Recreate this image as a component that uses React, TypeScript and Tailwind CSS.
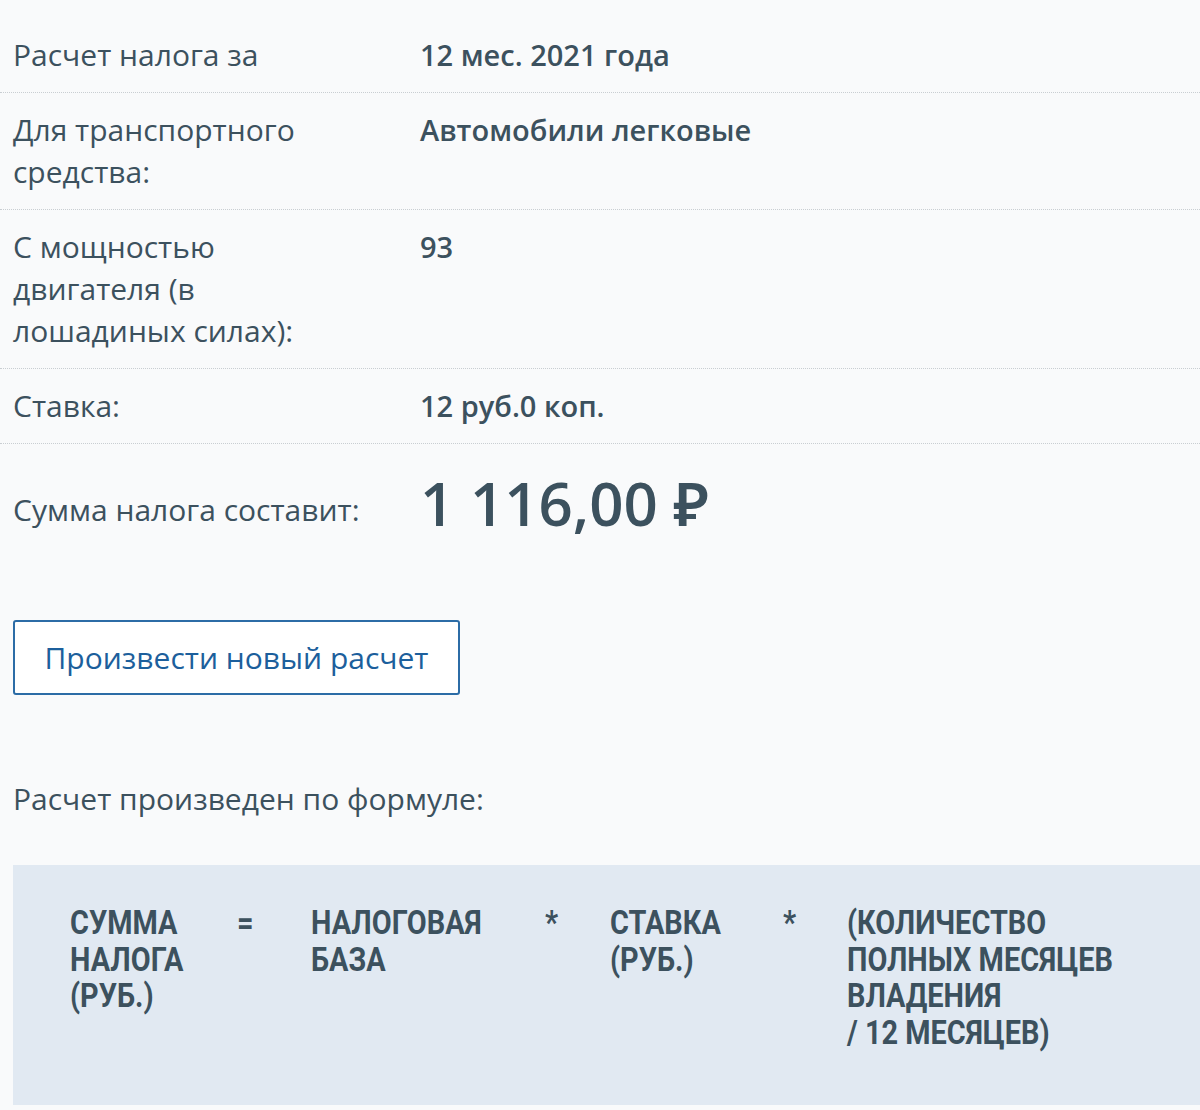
const rows = [
  { label: ['Расчет налога за'], value: '12 мес. 2021 года' },
  { label: ['Для транспортного', 'средства:'], value: 'Автомобили легковые' },
  { label: ['С мощностью', 'двигателя (в', 'лошадиных силах):'], value: '93' },
  { label: ['Ставка:'], value: '12 руб.0 коп.' },
];

const formula = [
  ['СУММА', 'НАЛОГА', '(РУБ.)'],
  ['='],
  ['НАЛОГОВАЯ', 'БАЗА'],
  ['*'],
  ['СТАВКА', '(РУБ.)'],
  ['*'],
  ['(КОЛИЧЕСТВО', 'ПОЛНЫХ МЕСЯЦЕВ', 'ВЛАДЕНИЯ', '/ 12 МЕСЯЦЕВ)'],
];

export default function App() {
  return (
    <div
      className="min-h-[1110px] w-[1200px] overflow-hidden bg-[#f9fafb] pt-[18px] text-[#3c515e]"
      style={{ fontFamily: '"Open Sans", "Noto Sans", sans-serif' }}
    >
      {/* Result rows */}
      {rows.map((row, i) => (
        <div
          key={i}
          className="flex border-b border-dotted border-[#c9ced2] py-4 pl-[13px]"
        >
          <div className="w-[407px] text-[30px] leading-[42px]">
            {row.label.map((l, j) => (
              <div key={j}>{l}</div>
            ))}
          </div>
          <div className="text-[29px] font-semibold leading-[42px]">
            {row.value}
          </div>
        </div>
      ))}

      {/* Total */}
      <div className="flex items-center pl-[13px] pt-[16px]">
        <div className="w-[407px] pt-[14px] text-[30px] leading-[42px]">
          Сумма налога составит:
        </div>
        <div className="text-[60px] font-semibold leading-[86px]">
          1 116,00 ₽
        </div>
      </div>

      <div className="pl-[13px] pt-[74px]">
        <button className="h-[75px] w-[447px] rounded-[3px] border-2 border-[#2c6ca6] bg-white text-[30px] text-[#1c5f9c]">
          Произвести новый расчет
        </button>
      </div>

      <div className="pl-[13px] pt-[83px] text-[30px] leading-[42px]">
        Расчет произведен по формуле:
      </div>

      {/* Formula */}
      <div className="ml-[13px] mt-[45px] h-[240px] bg-[#e1e9f2] pl-[57px] pt-[39px]">
        <div
          className="grid grid-cols-[167px_74px_234px_65px_173px_64px_1fr] text-[34px] font-bold uppercase leading-[36.5px] text-[#3c515e]"
          style={{ fontFamily: 'Roboto, "Liberation Sans", sans-serif' }}
        >
          {formula.map((col, i) => (
            <div key={i}>
              {col.map((l, j) => (
                <div key={j} className="origin-left scale-x-[0.85] whitespace-nowrap">
                  {l}
                </div>
              ))}
            </div>
          ))}
        </div>
      </div>
    </div>
  );
}
